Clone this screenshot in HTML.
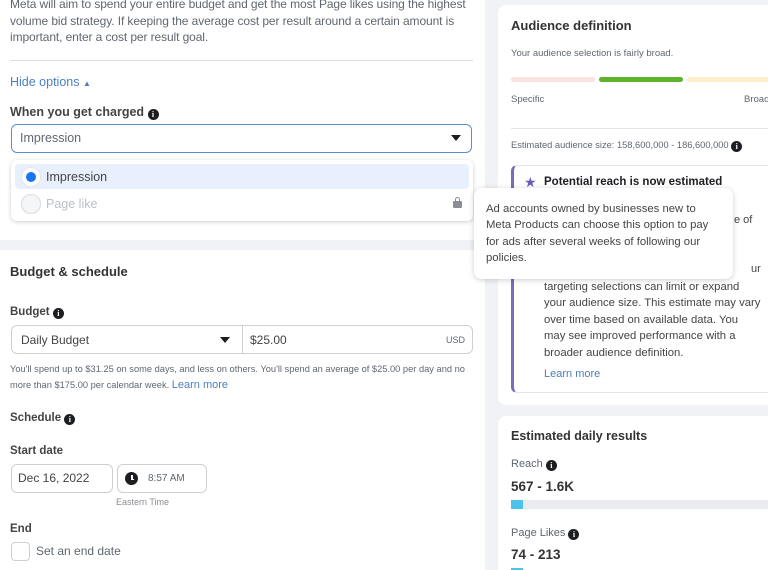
<!DOCTYPE html>
<html><head><style>
*{box-sizing:border-box;margin:0;padding:0}
html,body{width:768px;height:570px;overflow:hidden}
body{background:#f0f2f5;font-family:"Liberation Sans",sans-serif;color:#1c1e21;position:relative}
.a{position:absolute}
.card{position:absolute;background:#fff;border-radius:8px}
.i{display:inline-block;width:11px;height:11px;border-radius:50%;background:#1c1e21;color:#fff;font-size:8px;font-weight:bold;text-align:center;line-height:11px;vertical-align:-1px;font-family:"Liberation Serif",serif}
.b{font-weight:bold;color:#444}
.box{position:absolute;border:1px solid #ccd0d5;border-radius:6px;background:#fff}
.caret{position:absolute;width:0;height:0;border-left:5px solid transparent;border-right:5px solid transparent;border-top:6px solid #1c1e21}
</style></head><body>
<div class="card" style="left:0;top:-10px;width:485px;height:250px;border-radius:0 0 8px 0"></div>
<div class="a" style="left:10px;top:-4px;width:470px;font-size:12px;line-height:16.5px;color:#606770;letter-spacing:-0.1px">Meta will aim to spend your entire budget and get the most Page likes using the highest volume bid strategy. If keeping the average cost per result around a certain amount is important, enter a cost per result goal.</div>
<div class="a" style="left:10px;top:60px;width:463px;height:1px;background:#dadde1"></div>
<div class="a" style="left:10px;top:75px;font-size:12.5px;color:#4a7fc1">Hide options <span style="font-size:8px">▲</span></div>
<div class="a b" style="left:10px;top:105px;font-size:12.5px">When you get charged <span class="i">i</span></div>
<div class="box" style="left:11px;top:124px;width:461px;height:29px;border:1.5px solid #5b8fc7"></div>
<div class="a" style="left:20px;top:131px;font-size:12.5px;color:#606770">Impression</div>
<div class="caret" style="left:451px;top:135px"></div>
<div class="card" style="left:11px;top:160px;width:462px;height:61px;box-shadow:0 1px 4px rgba(0,0,0,.2);border-radius:6px"></div>
<div class="a" style="left:15px;top:164px;width:454px;height:25px;background:#e7f0fc;border-radius:4px"></div>
<div class="a" style="left:21px;top:167px;width:20px;height:20px;border-radius:50%;background:#fff;border:1px solid #e4e6eb"></div>
<div class="a" style="left:26px;top:172px;width:10px;height:10px;border-radius:50%;background:#1877f2"></div>
<div class="a" style="left:46px;top:170px;font-size:12.5px;color:#444">Impression</div>
<div class="a" style="left:21px;top:194px;width:20px;height:20px;border-radius:50%;background:#f5f6f7;border:1px solid #dadde1"></div>
<div class="a" style="left:46px;top:197px;font-size:12.5px;color:#bcc0c4">Page like</div>
<div class="a" style="left:453px;top:201px;width:9px;height:7px;background:#8a8d91;border-radius:1px"></div>
<div class="a" style="left:455px;top:197px;width:5px;height:6px;border:1.5px solid #8a8d91;border-bottom:none;border-radius:3px 3px 0 0"></div>

<div class="card" style="left:0;top:250px;width:485px;height:330px;border-radius:0 8px 0 0"></div>
<div class="a b" style="left:10px;top:264px;font-size:13px;color:#333">Budget &amp; schedule</div>
<div class="a b" style="left:10px;top:306px;font-size:11.5px">Budget <span class="i">i</span></div>
<div class="box" style="left:11px;top:325px;width:462px;height:29px"></div>
<div class="a" style="left:242px;top:326px;width:1px;height:27px;background:#ccd0d5"></div>
<div class="a" style="left:21px;top:333px;font-size:12px;color:#444">Daily Budget</div>
<div class="caret" style="left:220px;top:337px"></div>
<div class="a" style="left:250px;top:333px;font-size:12px;color:#444">$25.00</div>
<div class="a" style="left:446px;top:335px;font-size:9px;color:#606770">USD</div>
<div class="a" style="left:10px;top:362px;width:470px;font-size:9.3px;line-height:15.5px;color:#606770">You'll spend up to $31.25 on some days, and less on others. You'll spend an average of $25.00 per day and no more than $175.00 per calendar week. <span style="color:#4a7fc1;font-size:11px">Learn more</span></div>
<div class="a b" style="left:10px;top:412px;font-size:11.5px">Schedule <span class="i">i</span></div>
<div class="a b" style="left:10px;top:445px;font-size:11.5px">Start date</div>
<div class="box" style="left:11px;top:464px;width:102px;height:29px"></div>
<div class="a" style="left:18px;top:471px;font-size:12px;color:#444">Dec 16, 2022</div>
<div class="box" style="left:117px;top:464px;width:90px;height:29px"></div>
<div class="a" style="left:125px;top:472px;width:13px;height:13px;border-radius:50%;background:#1c1e21"></div>
<div class="a" style="left:131px;top:475px;width:1.5px;height:4px;background:#fff"></div>
<div class="a" style="left:131px;top:478.5px;width:3px;height:1.5px;background:#fff"></div>
<div class="a" style="left:148px;top:473px;font-size:10px;color:#606770">8:57 AM</div>
<div class="a" style="left:116px;top:497px;font-size:9px;color:#8a8d91">Eastern Time</div>
<div class="a b" style="left:10px;top:523px;font-size:11.5px">End</div>
<div class="a" style="left:11px;top:542px;width:19px;height:19px;border:1px solid #ccd0d5;border-radius:4px"></div>
<div class="a" style="left:36px;top:544px;font-size:12px;color:#606770">Set an end date</div>

<div class="card" style="left:498px;top:5px;width:290px;height:400px"></div>
<div class="a b" style="left:511px;top:18px;font-size:13px;color:#333">Audience definition</div>
<div class="a" style="left:511px;top:48px;font-size:9.5px;color:#606770">Your audience selection is fairly broad.</div>
<div class="a" style="left:511px;top:77px;width:84px;height:5px;border-radius:3px;background:#fbe1df"></div>
<div class="a" style="left:599px;top:77px;width:84px;height:5px;border-radius:3px;background:#5db32a"></div>
<div class="a" style="left:687px;top:77px;width:90px;height:5px;border-radius:3px;background:#fcefc9"></div>
<div class="a" style="left:511px;top:94px;font-size:9.5px;color:#606770">Specific</div>
<div class="a" style="left:744px;top:94px;font-size:9.5px;color:#606770">Broad</div>
<div class="a" style="left:511px;top:128px;width:260px;height:1px;background:#e4e6eb"></div>
<div class="a" style="left:511px;top:140px;font-size:9.3px;color:#606770">Estimated audience size: 158,600,000 - 186,600,000 <span class="i">i</span></div>
<div class="a" style="left:511px;top:165px;width:270px;height:228px;border:1px solid #e4e6eb;border-left:3px solid #7b6bb8;border-radius:6px"></div>
<div class="a" style="left:524px;top:174px;font-size:14px;color:#6e5bb8">★</div>
<div class="a b" style="left:544px;top:176px;font-size:11.5px;color:#1c1e21">Potential reach is now estimated</div>
<div class="a" style="left:734px;top:214px;font-size:11px;color:#444">e of</div>
<div class="a" style="left:751px;top:263px;font-size:11px;color:#444">ur</div>
<div class="a" style="left:544px;top:279px;width:240px;white-space:nowrap;font-size:11.3px;line-height:16.4px;color:#444">targeting selections can limit or expand<br>your audience size. This estimate may vary<br>over time based on available data. You<br>may see improved performance with a<br>broader audience definition.</div>
<div class="a" style="left:544px;top:368px;font-size:11px;color:#4a7fc1">Learn more</div>

<div class="card" style="left:474px;top:188px;width:259px;height:91px;box-shadow:0 1px 6px rgba(0,0,0,.2)"></div>
<div class="a" style="left:486px;top:201px;width:232px;font-size:11.3px;line-height:16.3px;color:#444">Ad accounts owned by businesses new to Meta Products can choose this option to pay for ads after several weeks of following our policies.</div>

<div class="card" style="left:498px;top:416px;width:290px;height:170px"></div>
<div class="a b" style="left:511px;top:429px;font-size:12.5px;color:#333">Estimated daily results</div>
<div class="a" style="left:511px;top:458px;font-size:11px;color:#606770">Reach <span class="i">i</span></div>
<div class="a b" style="left:511px;top:479px;font-size:13.5px;color:#333">567 - 1.6K</div>
<div class="a" style="left:511px;top:500px;width:260px;height:9px;background:#e9ebee"></div>
<div class="a" style="left:511px;top:500px;width:12px;height:9px;background:#4cc3e8"></div>
<div class="a" style="left:511px;top:527px;font-size:11px;color:#606770">Page Likes <span class="i">i</span></div>
<div class="a b" style="left:511px;top:547px;font-size:13.5px;color:#333">74 - 213</div>
<div class="a" style="left:511px;top:568px;width:12px;height:3px;background:#4cc3e8"></div>
</body></html>
